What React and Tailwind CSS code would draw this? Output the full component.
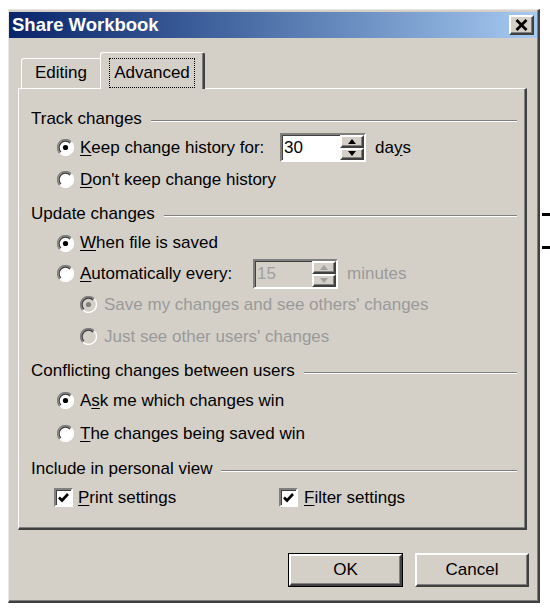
import { useState } from "react";

// classic 3d borders
const raised = "border-2 border-t-white border-l-white border-r-[#404040] border-b-[#404040] shadow-[inset_-1px_-1px_0_#808080]";
const sunken = "border-2 border-t-[#808080] border-l-[#808080] border-r-white border-b-white shadow-[inset_1px_1px_0_#404040]";

function Radio({ checked, disabled }) {
  return (
    <svg width="17" height="17" viewBox="0 0 17 17" className="shrink-0">
      <circle cx="8.5" cy="8.5" r="7.5" fill={disabled ? "#d4d0c8" : "#fff"} />
      <path d="M2.84 14.16 A8 8 0 0 1 14.16 2.84" fill="none" stroke="#808080" strokeWidth="1.4" />
      <path d="M3.9 13.1 A6.5 6.5 0 0 1 13.1 3.9" fill="none" stroke="#404040" strokeWidth="1.4" />
      <path d="M14.16 2.84 A8 8 0 0 1 2.84 14.16" fill="none" stroke="#fff" strokeWidth="1.3" />
      {checked && <circle cx="8.5" cy="8.5" r="2.6" fill={disabled ? "#808080" : "#000"} />}
    </svg>
  );
}

function Check({ checked }) {
  return (
    <div className={`flex h-[19px] w-[19px] shrink-0 items-center justify-center bg-white ${sunken}`}>
      {checked && (
        <svg width="13" height="13" viewBox="0 0 13 13">
          <path d="M2 6.5 L5 9.5 L11 3" fill="none" stroke="#000" strokeWidth="2.6" />
        </svg>
      )}
    </div>
  );
}

function Spin({ value, disabled }) {
  const arrow = disabled ? "#a0a0a0" : "#000";
  return (
    <div className={`flex h-full ${sunken} ${disabled ? "bg-[#d4d0c8]" : "bg-white"}`}>
      <span className={`flex flex-1 items-center pl-[2px] ${disabled ? "text-[#a0a0a0]" : ""}`}>{value}</span>
      <div className="flex w-[24px] flex-col">
        <div className={`flex flex-1 items-center justify-center bg-[#d4d0c8] ${raised}`}>
          <svg width="8" height="5" viewBox="0 0 8 5"><path d="M0 5 L4 0 L8 5 Z" fill={arrow} /></svg>
        </div>
        <div className={`flex flex-1 items-center justify-center bg-[#d4d0c8] ${raised}`}>
          <svg width="8" height="5" viewBox="0 0 8 5"><path d="M0 0 L8 0 L4 5 Z" fill={arrow} /></svg>
        </div>
      </div>
    </div>
  );
}

function Group({ title, h }) {
  return (
    <div className={`flex items-center pl-[12px] pr-[8px] pt-[4px] ${h}`}>
      <span className="whitespace-nowrap">{title}</span>
      <div className="ml-[9px] mt-[4px] flex-1 border-t border-b border-t-[#808080] border-b-white" />
    </div>
  );
}

function Option({ h, indent, checked, disabled, children }) {
  return (
    <div className={`flex items-center ${h} ${indent}`}>
      <Radio checked={checked} disabled={disabled} />
      <div className={`ml-[6px] flex h-full items-center ${disabled ? "text-[#9a9a9a]" : ""}`}>{children}</div>
    </div>
  );
}

const U = ({ children }) => <span className="underline underline-offset-2">{children}</span>;

export default function App() {
  const [tab, setTab] = useState("advanced");

  return (
    <div className="flex h-[612px] w-[550px] bg-white font-['Liberation_Sans',Arial,sans-serif] text-[17px] text-black">
      <div className="ml-[8px] mt-[9px] flex h-fit w-[532px] flex-col border-l border-t border-l-[#e8e6e2] border-t-[#e8e6e2] border-r-2 border-b-2 border-r-[#404040] border-b-[#404040] bg-[#d4d0c8] shadow-[inset_-1px_-1px_0_#808080]">
        {/* title bar */}
        <div className="mt-[2px] mr-[1px] flex h-[26px] items-center justify-between bg-linear-to-r from-[#0a246a] to-[#a6caf0] pl-[3px] pr-[3px]">
          <span className="text-[18.5px] font-bold text-white">Share Workbook</span>
          <button className={`flex h-[20px] w-[25px] items-center justify-center bg-[#d4d0c8] ${raised}`}>
            <svg width="13" height="12" viewBox="0 0 13 12">
              <path d="M1.5 1 L11.5 11 M11.5 1 L1.5 11" stroke="#000" strokeWidth="2.8" />
            </svg>
          </button>
        </div>

        {/* tabs */}
        <div className="relative z-10 mt-[14px] -mb-[1px] ml-[12px] flex h-[37px] items-end">
          <button
            onClick={() => setTab("editing")}
            className="flex h-[31px] w-[79px] items-center justify-center rounded-tl-[3px] border-l border-t border-l-white border-t-white pb-[2px]"
          >
            Editing
          </button>
          <button
            onClick={() => setTab("advanced")}
            className="flex h-[37px] w-[105px] items-start justify-center rounded-t-[3px] border-l border-t border-r-2 border-l-white border-t-white border-r-[#404040] bg-[#d4d0c8] pt-[5px] shadow-[inset_-1px_0_0_#808080]"
          >
            <span className={`px-[4px] py-[1px] ${tab === "advanced" ? "border border-dotted border-black" : "border border-transparent"}`}>Advanced</span>
          </button>
        </div>

        {/* panel */}
        <div className="ml-[9px] flex h-[442px] w-[509px] flex-col border-l border-t border-l-white border-t-white border-r-2 border-b-2 border-r-[#404040] border-b-[#404040] pt-[13px] shadow-[inset_-1px_-1px_0_#808080]">
          <Group title="Track changes" h="h-[30px]" />
          <div className="flex h-[31px] items-center pl-[38px]">
            <Radio checked />
            <span className="ml-[6px] w-[200px]"><U>K</U>eep change history for:</span>
            <div className="h-[29px] w-[86px]"><Spin value="30" /></div>
            <span className="ml-[9px]">da<U>y</U>s</span>
          </div>
          <Option h="h-[33px]" indent="pl-[38px]"><span><U>D</U>on't keep change history</span></Option>

          <Group title="Update changes" h="h-[32px]" />
          <Option h="h-[30px]" indent="pl-[38px]" checked><span><U>W</U>hen file is saved</span></Option>
          <div className="flex h-[31px] items-center pl-[38px]">
            <Radio />
            <span className="ml-[6px] w-[173px]"><U>A</U>utomatically every:</span>
            <div className="h-[30px] w-[85px]"><Spin value="15" disabled /></div>
            <span className="ml-[9px] text-[#9a9a9a]">minutes</span>
          </div>
          <Option h="h-[31px]" indent="pl-[61px]" checked disabled><span className="ml-[1px]">Save my changes and see others' changes</span></Option>
          <Option h="h-[33px]" indent="pl-[61px]" disabled><span className="ml-[1px]">Just see other users' changes</span></Option>

          <Group title="Conflicting changes between users" h="h-[32px]" />
          <Option h="h-[31px]" indent="pl-[38px]" checked><span>A<U>s</U>k me which changes win</span></Option>
          <Option h="h-[35px]" indent="pl-[38px]"><span><U>T</U>he changes being saved win</span></Option>

          <Group title="Include in personal view" h="h-[32px]" />
          <div className="flex h-[29px] items-center pl-[35px]">
            <div className="flex w-[225px] items-center">
              <Check checked />
              <span className="ml-[5px]"><U>P</U>rint settings</span>
            </div>
            <Check checked />
            <span className="ml-[6px]"><U>F</U>ilter settings</span>
          </div>
        </div>

        {/* buttons */}
        <div className="mt-[23px] mb-[14px] flex justify-end gap-[12px] pr-[9px]">
          <div className="h-[34px] w-[115px] border border-black">
            <button className={`flex h-full w-full items-center justify-center bg-[#d4d0c8] ${raised}`}>OK</button>
          </div>
          <button className={`flex h-[34px] w-[114px] items-center justify-center bg-[#d4d0c8] ${raised}`}>Cancel</button>
        </div>
      </div>

      {/* edge of the sheet behind the dialog */}
      <div className="ml-[2px] flex-1 pt-[213px]">
        <div className="h-[3px] bg-black" />
        <div className="mt-[30px] h-[3px] bg-black" />
      </div>
    </div>
  );
}
